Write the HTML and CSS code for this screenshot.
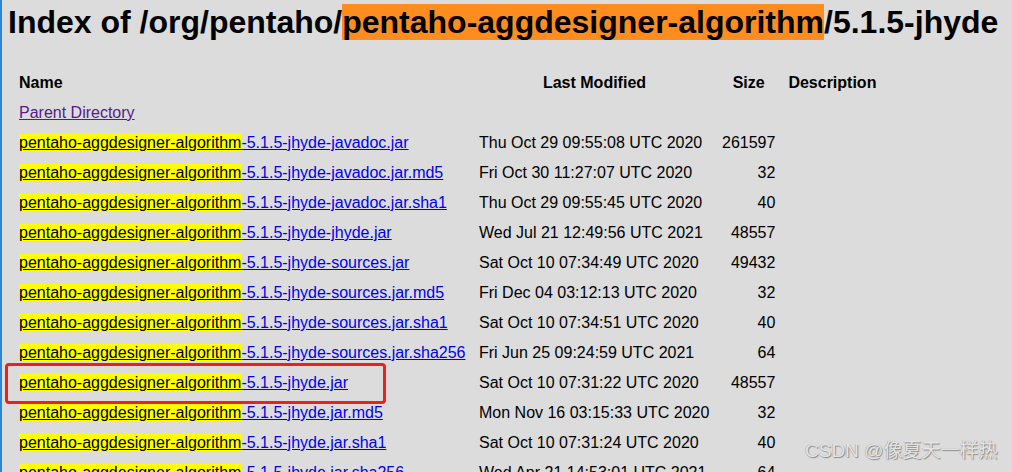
FILE: index.html
```html
<!DOCTYPE html>
<html>
<head>
<meta charset="utf-8">
<title>Index of /org/pentaho/pentaho-aggdesigner-algorithm/5.1.5-jhyde</title>
<link rel="stylesheet" href="styles.css">
</head>
<body>
<h1 class="title">Index of /org/pentaho/<span class="hit-active">pentaho-aggdesigner-algorithm</span>/5.1.5-jhyde</h1>
<table class="listing">
  <colgroup>
    <col class="c-name"><col class="c-date"><col class="c-size"><col class="c-desc">
  </colgroup>
  <thead>
    <tr><th class="h-name">Name</th><th class="h-date">Last Modified</th><th class="h-size">Size</th><th class="h-desc">Description</th></tr>
  </thead>
  <tbody>
    <tr><td class="name"><a class="visited" href="#">Parent Directory</a></td><td class="date"></td><td class="size"></td><td></td></tr>
    <tr><td class="name"><a href="#"><mark>pentaho-aggdesigner-algorithm</mark>-5.1.5-jhyde-javadoc.jar</a></td><td class="date">Thu Oct 29 09:55:08 UTC 2020</td><td class="size">261597</td><td></td></tr>
    <tr><td class="name"><a href="#"><mark>pentaho-aggdesigner-algorithm</mark>-5.1.5-jhyde-javadoc.jar.md5</a></td><td class="date">Fri Oct 30 11:27:07 UTC 2020</td><td class="size">32</td><td></td></tr>
    <tr><td class="name"><a href="#"><mark>pentaho-aggdesigner-algorithm</mark>-5.1.5-jhyde-javadoc.jar.sha1</a></td><td class="date">Thu Oct 29 09:55:45 UTC 2020</td><td class="size">40</td><td></td></tr>
    <tr><td class="name"><a href="#"><mark>pentaho-aggdesigner-algorithm</mark>-5.1.5-jhyde-jhyde.jar</a></td><td class="date">Wed Jul 21 12:49:56 UTC 2021</td><td class="size">48557</td><td></td></tr>
    <tr><td class="name"><a href="#"><mark>pentaho-aggdesigner-algorithm</mark>-5.1.5-jhyde-sources.jar</a></td><td class="date">Sat Oct 10 07:34:49 UTC 2020</td><td class="size">49432</td><td></td></tr>
    <tr><td class="name"><a href="#"><mark>pentaho-aggdesigner-algorithm</mark>-5.1.5-jhyde-sources.jar.md5</a></td><td class="date">Fri Dec 04 03:12:13 UTC 2020</td><td class="size">32</td><td></td></tr>
    <tr><td class="name"><a href="#"><mark>pentaho-aggdesigner-algorithm</mark>-5.1.5-jhyde-sources.jar.sha1</a></td><td class="date">Sat Oct 10 07:34:51 UTC 2020</td><td class="size">40</td><td></td></tr>
    <tr><td class="name"><a href="#"><mark>pentaho-aggdesigner-algorithm</mark>-5.1.5-jhyde-sources.jar.sha256</a></td><td class="date">Fri Jun 25 09:24:59 UTC 2021</td><td class="size">64</td><td></td></tr>
    <tr><td class="name"><a href="#"><mark>pentaho-aggdesigner-algorithm</mark>-5.1.5-jhyde.jar</a></td><td class="date">Sat Oct 10 07:31:22 UTC 2020</td><td class="size">48557</td><td></td></tr>
    <tr><td class="name"><a href="#"><mark>pentaho-aggdesigner-algorithm</mark>-5.1.5-jhyde.jar.md5</a></td><td class="date">Mon Nov 16 03:15:33 UTC 2020</td><td class="size">32</td><td></td></tr>
    <tr><td class="name"><a href="#"><mark>pentaho-aggdesigner-algorithm</mark>-5.1.5-jhyde.jar.sha1</a></td><td class="date">Sat Oct 10 07:31:24 UTC 2020</td><td class="size">40</td><td></td></tr>
    <tr><td class="name"><a href="#"><mark>pentaho-aggdesigner-algorithm</mark>-5.1.5-jhyde.jar.sha256</a></td><td class="date">Wed Apr 21 14:53:01 UTC 2021</td><td class="size">64</td><td></td></tr>
  </tbody>
</table>
<div class="callout"></div>
<div class="watermark">CSDN @像夏天一样热</div>
</body>
</html>
```

FILE: styles.css
```css
html {
  background: #dcdcdc;
}
body {
  margin: 0;
  padding: 4px 0 0 6px;
  border-left: 2px solid #2a84d8;
  box-sizing: border-box;
  background: #dcdcdc;
  font-family: "Liberation Sans", Arial, sans-serif;
  color: #000;
  overflow: hidden;
  height: 472px;
}
.title {
  margin: 0 0 28px 0;
  font-size: 32px;
  line-height: 36px;
  font-weight: bold;
  white-space: nowrap;
}
.hit-active {
  background: #ff8c1e;
}
.listing {
  margin-left: 11px;
  border-collapse: collapse;
  border-spacing: 0;
  table-layout: fixed;
  font-size: 16px;
  line-height: 18px;
}
.c-name { width: 460px; }
.c-date { width: 243px; }
.c-size { width: 66px; }
.c-desc { width: 100px; }
.listing th,
.listing td {
  height: 30px;
  padding: 0;
  vertical-align: middle;
  white-space: nowrap;
}
.listing th {
  font-weight: bold;
}
.listing th.h-name { text-align: left; }
.listing th.h-date { text-align: center; padding-right: 12px; }
.listing th.h-size { text-align: center; padding-right: 13px; }
.listing th.h-desc { text-align: left; }
.listing td.date { padding-right: 12px; }
.listing td.size { text-align: right; padding-right: 13px; }
a {
  color: #0000ee;
  text-decoration: underline;
}
a.visited {
  color: #551a8b;
}
mark {
  background: #ffff00;
  color: #000;
  text-decoration: underline;
}
.callout {
  position: absolute;
  left: 5px;
  top: 363px;
  width: 375px;
  height: 35px;
  border: 3px solid #e8231f;
  border-radius: 4px;
}
.watermark {
  position: absolute;
  left: 805px;
  top: 439px;
  font-family: "Liberation Sans", "Noto Sans CJK SC", sans-serif;
  font-size: 19px;
  line-height: 24px;
  color: #e4e4e4;
  text-shadow: 1px 1px 1px #8a8a8a, -0.5px -0.5px 0 #a8a8a8;
  white-space: nowrap;
}
```
